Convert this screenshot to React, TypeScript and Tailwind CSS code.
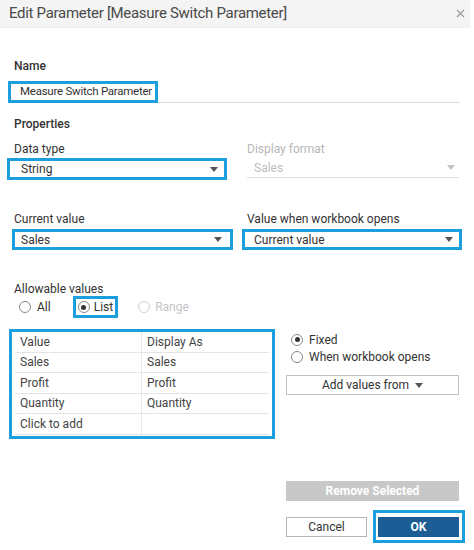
const FONT = { fontFamily: "Roboto, 'Liberation Sans', sans-serif" };

function Caret({ muted = false }: { muted?: boolean }) {
  return (
    <svg width="8" height="5" viewBox="0 0 8 5" className="shrink-0">
      <path d="M0 0h8L4 5z" fill={muted ? "#c4c4c4" : "#555"} />
    </svg>
  );
}

function Radio({ checked = false, muted = false }: { checked?: boolean; muted?: boolean }) {
  return (
    <span
      className={`flex h-[12px] w-[12px] shrink-0 items-center justify-center rounded-full border ${
        muted ? "border-[#d0d0d0]" : "border-[#8a8a8a]"
      } bg-white`}
    >
      {checked && <span className="h-[5px] w-[5px] rounded-full bg-[#333]" />}
    </span>
  );
}

const ROWS = [
  ["Value", "Display As"],
  ["Sales", "Sales"],
  ["Profit", "Profit"],
  ["Quantity", "Quantity"],
  ["Click to add", ""],
];

export default function App() {
  return (
    <div style={FONT} className="h-[550px] w-[474px] overflow-hidden bg-white text-[12px] text-[#333]">
      <div className="flex h-[27px] w-[470px] items-center justify-between bg-[#f4f4f4] pl-[9px] pr-[5px] shadow-[0_1px_1px_rgba(0,0,0,0.06)]">
        <span className="whitespace-nowrap text-[15px] tracking-[-0.3px] text-[#4a4a4a]">
          Edit Parameter [Measure Switch Parameter]
        </span>
        <svg width="9" height="9" viewBox="0 0 9 9">
          <path d="M1 1l7 7M8 1L1 8" stroke="#999" strokeWidth="1.1" />
        </svg>
      </div>

      <div className="mt-[32px] h-[14px] pl-[14px] leading-[14px] font-medium">Name</div>
      <div className="ml-[8px] mt-[8px] h-[22px] w-[452px] border-b border-[#dcdcdc]">
        <div className="flex h-[22px] w-[150px] items-center whitespace-nowrap border-[3px] border-[#1b9fdf] pl-[9px] text-[11.5px] tracking-[-0.25px]">
          Measure Switch Parameter
        </div>
      </div>

      <div className="mt-[14px] h-[14px] pl-[14px] leading-[14px] font-medium">Properties</div>

      <div className="mt-[11px] flex">
        <div className="ml-[7px] w-[220px]">
          <div className="h-[14px] pl-[7px] leading-[14px]">Data type</div>
          <div className="mt-[2px] flex h-[22px] items-center justify-between border-[3px] border-[#1b9fdf] pl-[11px] pr-[6px]">
            <span>String</span>
            <Caret />
          </div>
        </div>
        <div className="ml-[20px] w-[212px]">
          <div className="h-[14px] leading-[14px] text-[#b8b8b8]">Display format</div>
          <div className="mt-[2px] flex h-[20px] items-center justify-between border-b border-[#dedede] pl-[7px] pr-[4px] text-[#bdbdbd]">
            <span>Sales</span>
            <Caret muted />
          </div>
        </div>
      </div>

      <div className="mt-[32px] flex">
        <div className="ml-[12px] w-[221px]">
          <div className="h-[14px] pl-[2px] leading-[14px]">Current value</div>
          <div className="mt-[3px] flex h-[21px] items-center justify-between border-[3px] border-[#1b9fdf] pl-[6px] pr-[8px]">
            <span>Sales</span>
            <Caret />
          </div>
        </div>
        <div className="ml-[9px] w-[220px]">
          <div className="h-[14px] pl-[5px] leading-[14px]">Value when workbook opens</div>
          <div className="mt-[3px] flex h-[21px] items-center justify-between border-[3px] border-[#1b9fdf] pl-[9px] pr-[6px]">
            <span>Current value</span>
            <Caret />
          </div>
        </div>
      </div>

      <div className="mt-[32px] h-[14px] pl-[14px] leading-[14px]">Allowable values</div>
      <div className="flex h-[22px] items-center">
        <div className="ml-[19px] flex items-center gap-[6px]">
          <Radio />
          <span>All</span>
        </div>
        <div className="ml-[22px] flex h-[22px] items-center gap-[4px] border-[3px] border-[#1b9fdf] pl-[2px] pr-[2px]">
          <Radio checked />
          <span>List</span>
        </div>
        <div className="ml-[20px] flex items-center gap-[5px] text-[#c4c4c4]">
          <Radio muted />
          <span>Range</span>
        </div>
      </div>

      <div className="mt-[11px] flex">
        <div className="ml-[9px] h-[110px] w-[266px] border-[3px] border-[#1b9fdf] px-[3px]">
          {ROWS.map(([a, b]) => (
            <div key={a} className="flex h-[20.5px] border-b border-[#e4e4e4] text-[#444]">
              <div className="flex w-[127px] items-center border-r border-[#e8e8e8] pl-[5px]">{a}</div>
              <div className="flex flex-1 items-center pl-[5px]">{b}</div>
            </div>
          ))}
        </div>
        <div className="ml-[11px] w-[173px] pt-[2px]">
          <div className="flex h-[17px] items-center gap-[6px] pl-[5px]">
            <Radio checked />
            <span>Fixed</span>
          </div>
          <div className="flex h-[17px] items-center gap-[6px] pl-[5px]">
            <Radio />
            <span>When workbook opens</span>
          </div>
          <div className="mt-[10px] flex h-[20px] items-center justify-center gap-[6px] border border-[#c2c2c2] bg-white">
            <span>Add values from</span>
            <Caret />
          </div>
        </div>
      </div>

      <div className="ml-[286px] mt-[42px] flex h-[20px] w-[173px] items-center justify-center bg-[#c8c8c8] font-bold text-white">
        Remove Selected
      </div>
      <div className="ml-[286px] mt-[9px] flex items-center">
        <div className="flex h-[20px] w-[81px] items-center justify-center border border-[#b5b5b5]">Cancel</div>
        <div className="ml-[6px] flex h-[33px] w-[92px] items-center border-[3px] border-[#1b9fdf] pl-[2px]">
          <div className="flex h-[20px] w-[81px] items-center justify-center bg-[#1d5d96] font-bold text-white">OK</div>
        </div>
      </div>
    </div>
  );
}
